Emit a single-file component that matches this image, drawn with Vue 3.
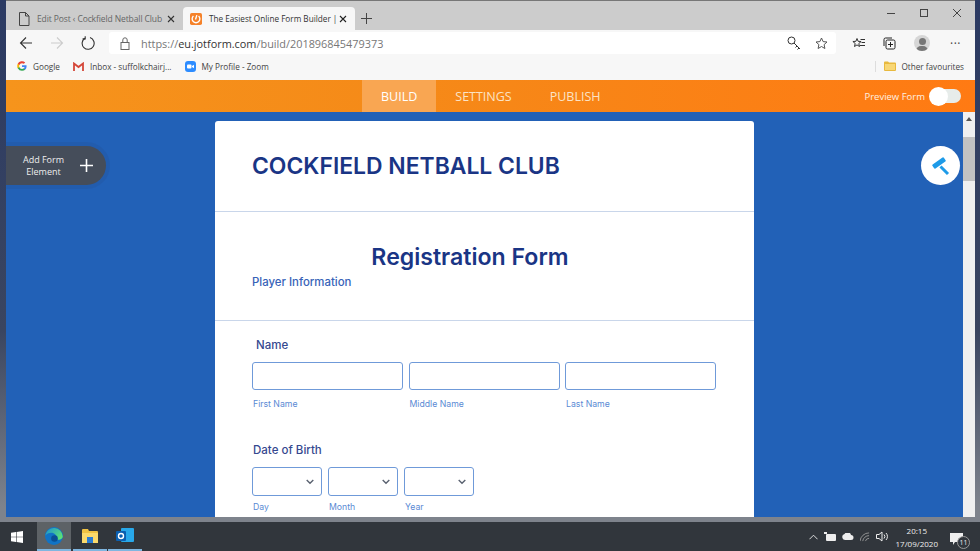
<script setup>
const navItems = [
  { label: 'BUILD', active: true },
  { label: 'SETTINGS', active: false },
  { label: 'PUBLISH', active: false }
]

const nameFields = ['First Name', 'Middle Name', 'Last Name']
const dateFields = ['Day', 'Month', 'Year']
</script>

<template>
  <div class="desktop">
    <div class="browser">
      <div class="tabstrip">
        <div class="tab">
          <svg class="tab-icon" width="16" height="16" viewBox="0 0 16 16" fill="none" stroke="#444" stroke-width="1">
            <path d="M3.5 1.5h6l3.5 3.5v9.500h-9.500z M9.500 1.500v3.500h3.500" />
          </svg>
          <span class="tab-title">Edit Post ‹ Cockfield Netball Club</span>
          <svg class="tab-close" width="8" height="8" viewBox="0 0 8 8" stroke="#333" stroke-width="1.1"><path d="M1 1l6 6M7 1l-6 6" /></svg>
        </div>
        <div class="tab current">
          <svg class="tab-icon" width="12" height="12" viewBox="0 0 14 14" fill="none">
            <rect width="14" height="14" rx="2" fill="#f5822a" />
            <path d="M4 3.500a4.500 4.500 0 1 0 6 0" stroke="#fff" stroke-width="1.600" />
            <path d="M8 2.500l-1.600 5" stroke="#fff" stroke-width="1.600" />
          </svg>
          <span class="tab-title">The Easiest Online Form Builder |</span>
          <svg class="tab-close" width="8" height="8" viewBox="0 0 8 8" stroke="#222" stroke-width="1.1"><path d="M1 1l6 6M7 1l-6 6" /></svg>
        </div>
        <svg class="new-tab" width="11" height="11" viewBox="0 0 11 11" stroke="#444" stroke-width="1"><path d="M5.500 0v11M0 5.500h11" /></svg>
        <div class="win-controls">
          <svg width="10" height="10" viewBox="0 0 10 10" stroke="#444" stroke-width="1"><path d="M1 5.500h8" /></svg>
          <svg width="10" height="10" viewBox="0 0 10 10" stroke="#444" stroke-width="1" fill="none"><rect x="1.500" y="1.500" width="7" height="7" /></svg>
          <svg width="10" height="10" viewBox="0 0 10 10" stroke="#444" stroke-width="1"><path d="M1 1l8 8M9 1l-8 8" /></svg>
        </div>
      </div>

      <div class="toolbar">
        <svg class="nav-icon" width="14" height="14" viewBox="0 0 14 14" fill="none" stroke="#333" stroke-width="1.1"><path d="M13 7H1.500M7 1.500L1.500 7 7 12.500" /></svg>
        <svg class="nav-icon" width="14" height="14" viewBox="0 0 14 14" fill="none" stroke="#ccc" stroke-width="1.1"><path d="M1 7h11.500M7 1.500L12.500 7 7 12.500" /></svg>
        <svg class="nav-icon" width="14" height="14" viewBox="0 0 14 14" fill="none" stroke="#333" stroke-width="1.1"><path d="M4 2.200A6 6 0 1 0 9 1.600" /><path d="M4.200 0.300v2.600h-2.600" /></svg>
        <div class="addressbar">
          <svg width="10" height="13" viewBox="0 0 10 13" fill="none" stroke="#666" stroke-width="1"><rect x="1" y="5.500" width="8" height="7" /><path d="M2.800 5.500V3a2.200 2.200 0 0 1 4.400 0v2.500" /></svg>
          <span class="url">https://<b>eu.jotform.com</b>/build/201896845479373</span>
          <svg class="key" width="14" height="14" viewBox="0 0 14 14" fill="none" stroke="#333" stroke-width="1"><circle cx="4.500" cy="4.500" r="3.500" /><path d="M7 7l6 6M10 10l-1.500 1.500M12 12l-1.500 1.500" /></svg>
          <svg class="star" width="13" height="13" viewBox="0 0 13 13" fill="none" stroke="#555" stroke-width="1"><path d="M6.500 1l1.600 3.600 3.900.4-2.900 2.600.8 3.900-3.400-2-3.400 2 .8-3.900L1 5l3.900-.4z" /></svg>
        </div>
        <div class="tool-icons">
          <svg width="13" height="13" viewBox="0 0 13 13" fill="none" stroke="#333" stroke-width="1"><path d="M5 1.500l1.100 2.800 3 .2-2.300 2 .7 3-2.500-1.600-2.500 1.600.7-3-2.300-2 3-.2z" /><path d="M8.500 2.500H13M9.500 5.500H13M8 8.500h5" /></svg>
          <svg width="13" height="13" viewBox="0 0 13 13" fill="none" stroke="#222" stroke-width="1"><rect x="3" y="3" width="9" height="9" rx="1.500" /><path d="M1 9V2.500A1.500 1.500 0 0 1 2.500 1H9M7.500 5v5M5 7.500h5" /></svg>
          <div class="avatar">
            <span class="avatar-head"></span>
            <span class="avatar-body"></span>
          </div>
          <span class="more">···</span>
        </div>
      </div>

      <div class="bookmarks">
        <div class="bookmark">
          <svg width="10" height="10" viewBox="0 0 24 24">
            <path fill="#4285f4" d="M23 12.300c0-.8-.1-1.600-.2-2.300H12v4.400h6.200a5.300 5.300 0 0 1-2.300 3.500v2.900h3.700c2.200-2 3.400-5 3.400-8.500z" />
            <path fill="#34a853" d="M12 23.500c3.100 0 5.700-1 7.600-2.800l-3.700-2.900c-1 .7-2.300 1.100-3.900 1.100-3 0-5.500-2-6.400-4.700H1.800v3a11.500 11.500 0 0 0 10.200 6.300z" />
            <path fill="#fbbc05" d="M5.600 14.200a6.900 6.900 0 0 1 0-4.400v-3H1.800a11.500 11.500 0 0 0 0 10.400z" />
            <path fill="#ea4335" d="M12 5.100c1.700 0 3.200.6 4.400 1.700l3.300-3.300A11.500 11.500 0 0 0 1.800 6.800l3.800 3c.9-2.700 3.400-4.700 6.400-4.700z" />
          </svg>
          <span>Google</span>
        </div>
        <div class="bookmark">
          <svg width="11" height="9" viewBox="0 0 11 9" fill="none" stroke="#d44638" stroke-width="1.800"><path d="M1 9V1.500L5.500 5 10 1.500V9" /></svg>
          <span>Inbox - suffolkchairj...</span>
        </div>
        <div class="bookmark">
          <svg width="11" height="11" viewBox="0 0 11 11"><rect width="11" height="11" rx="3" fill="#2d8cff" /><rect x="2" y="3.500" width="4.500" height="4" rx="1" fill="#fff" /><path d="M7 5l2-1.300v3.600L7 6z" fill="#fff" /></svg>
          <span>My Profile - Zoom</span>
        </div>
        <div class="other-favs">
          <svg width="12" height="10" viewBox="0 0 12 10"><path d="M0 1.500a1 1 0 0 1 1-1h3l1 1h6a1 1 0 0 1 1 1V9a1 1 0 0 1-1 1H1a1 1 0 0 1-1-1z" fill="#e8b93e" /><rect x="1" y="3" width="10" height="6" fill="#f8d775" /></svg>
          <span>Other favourites</span>
        </div>
      </div>

      <header class="builder-nav">
        <nav class="builder-tabs">
          <span v-for="item in navItems" :key="item.label" class="builder-tab" :class="{ active: item.active }">{{ item.label }}</span>
        </nav>
        <div class="preview">
          <span>Preview Form</span>
          <div class="toggle"><span class="knob"></span></div>
        </div>
      </header>

      <div class="stage">
        <main class="canvas">
          <button class="add-element">
            <span>Add Form Element</span>
            <svg width="13" height="13" viewBox="0 0 13 13" stroke="#fff" stroke-width="1.600"><path d="M6.500 0v13M0 6.500h13" /></svg>
          </button>
          <button class="paint">
            <svg width="20" height="20" viewBox="0 0 20 20" fill="#1e9be8">
              <rect x="1" y="4.500" width="14" height="5" rx="1" transform="rotate(-35 8 7)" />
              <path d="M9.500 10.500l7.500 7.500" stroke="#1e9be8" stroke-width="3" />
            </svg>
          </button>

          <section class="card">
            <div class="club">
              <h1>COCKFIELD NETBALL CLUB</h1>
            </div>
            <div class="intro">
              <h2>Registration Form</h2>
              <p>Player Information</p>
            </div>
            <div class="fields">
              <h3 class="name-label">Name</h3>
              <div class="name-row">
                <div v-for="field in nameFields" :key="field" class="name-field">
                  <div class="input"></div>
                  <label>{{ field }}</label>
                </div>
              </div>
              <h3 class="dob-label">Date of Birth</h3>
              <div class="dob-row">
                <div v-for="field in dateFields" :key="field" class="dob-field">
                  <div class="select">
                    <svg width="8" height="6" viewBox="0 0 8 6" fill="none" stroke="#5a6270" stroke-width="1.400"><path d="M.7 1l3.300 3.300L7.300 1" /></svg>
                  </div>
                  <label>{{ field }}</label>
                </div>
              </div>
            </div>
          </section>
        </main>

        <div class="scrollbar">
          <span class="arrow"></span>
          <span class="thumb"></span>
        </div>
      </div>
    </div>

    <footer class="taskbar">
      <svg class="start" width="12" height="12" viewBox="0 0 12 12" fill="#fff"><path d="M0 1.700l5-.7v4.700H0zM5.600.9L12 0v5.700H5.600zM0 6.300h5V11l-5-.7zM5.600 6.300H12V12l-6.400-.9z" /></svg>
      <div class="task-app running active">
        <svg width="18" height="18" viewBox="0 0 18 18">
          <defs>
            <linearGradient id="edgeGlow" x1="0" y1="0" x2="1" y2="0.600">
              <stop offset="0" stop-color="#1b8fd6" />
              <stop offset="1" stop-color="#5adf78" />
            </linearGradient>
          </defs>
          <circle cx="9" cy="9" r="9" fill="#1173c5" />
          <path d="M.3 8.500a8.800 8.800 0 0 1 17.500 1c0 2-2 3.200-4 3.200-1.500 0-2.500-.7-2.500-1.500 1.200-3-2-5.500-5-5.500-2.500 0-4.900 1.300-6 2.800z" fill="url(#edgeGlow)" />
          <circle cx="9.500" cy="11.500" r="3.300" fill="#0a4f94" />
        </svg>
      </div>
      <div class="task-app running">
        <svg width="16" height="14" viewBox="0 0 16 14"><path d="M0 1a1 1 0 0 1 1-1h5l1 2h8a1 1 0 0 1 1 1v10a1 1 0 0 1-1 1H1a1 1 0 0 1-1-1z" fill="#f0c243" /><rect x="0" y="4" width="16" height="10" fill="#fbd96b" /><rect x="5" y="8" width="6" height="6" fill="#2b7cd3" /></svg>
      </div>
      <div class="task-app running">
        <svg width="18" height="16" viewBox="0 0 18 16"><rect x="5" y="0" width="13" height="14" rx="1" fill="#28a8ea" /><rect x="0" y="3" width="10" height="10" rx="1" fill="#0a5fb0" /><circle cx="5" cy="8" r="2.500" fill="none" stroke="#fff" stroke-width="1.400" /></svg>
      </div>
      <div class="tray">
        <svg width="9" height="6" viewBox="0 0 10 6" fill="none" stroke="#eee" stroke-width="1"><path d="M.5 5.500L5 1l4.500 4.500" /></svg>
        <svg width="12" height="9" viewBox="0 0 12 9" fill="#eee"><rect x="2" y="2" width="10" height="7" rx="1" /><path d="M0 0h3v2H0z" /></svg>
        <svg width="12" height="7" viewBox="0 0 12 7" fill="#eee"><path d="M3 7a3 3 0 0 1-.5-5.900A3.500 3.500 0 0 1 9 2a2.500 2.500 0 0 1 0 5z" /></svg>
        <svg width="10" height="10" viewBox="0 0 11 10" fill="none" stroke="#999" stroke-width="1"><path d="M0 9.500A10 10 0 0 1 10 .5M3 9.500A7 7 0 0 1 10 3.500M6 9.500A4 4 0 0 1 10 6.500" /></svg>
        <svg width="12" height="11" viewBox="0 0 12 11" fill="none" stroke="#eee" stroke-width="1"><path d="M.5 3.500h2.500L6 1v9L3 7.500H.5zM8 3.500a3 3 0 0 1 0 4M10 2a5 5 0 0 1 0 7" /></svg>
        <div class="clock"><span>20:15</span><span>17/09/2020</span></div>
        <div class="notify">
          <svg width="13" height="12" viewBox="0 0 13 12" fill="#eee"><path d="M0 0h13v9H5l-2 3V9H0z" /></svg>
          <span class="notify-count">11</span>
        </div>
      </div>
    </footer>
  </div>
</template>

<style scoped>
.desktop {
  width: 980px;
  height: 551px;
  overflow: hidden;
  display: flex;
  flex-direction: column;
  background: linear-gradient(180deg, #2b3a63 0%, #3a4560 60%, #7e838c 92%);
  font-family: "Open Sans", "Noto Sans", sans-serif;
}

.browser {
  width: 969px;
  height: 517px;
  margin-left: 6px;
  flex: none;
  display: flex;
  flex-direction: column;
  overflow: hidden;
  border-top: 1px solid #777;
  box-sizing: border-box;
}

.tabstrip {
  height: 29px;
  flex: none;
  background: #cccccc;
  display: flex;
  align-items: flex-end;
  padding-left: 1px;
}

.tab {
  width: 176px;
  height: 23px;
  display: flex;
  align-items: center;
  padding: 0 8px 0 6px;
  box-sizing: border-box;
  font-size: 8.5px;
  letter-spacing: -0.1px;
  color: #666;
}

.tab-icon {
  flex: none;
  margin: 0 5px 0 3px;
}

.tab.current {
  width: 172px;
  background: #f7f7f7;
  border-radius: 4px 4px 0 0;
  color: #333;
  font-size: 8.2px;
  letter-spacing: 0;
}

.tab.current .tab-icon {
  margin: 0 7px 0 1px;
}

.tab-title {
  flex: none;
  white-space: nowrap;
}

.tab-close {
  flex: none;
  margin-left: auto;
}

.new-tab {
  margin: 0 0 6px 6px;
}

.win-controls {
  margin: 0 0 12px auto;
  display: flex;
  gap: 23px;
  padding-right: 13px;
  align-self: flex-end;
}

.toolbar {
  height: 26px;
  flex: none;
  background: #f7f7f7;
  display: flex;
  align-items: center;
  padding-left: 13px;
  gap: 17px;
}

.addressbar {
  width: 727px;
  height: 22px;
  margin-left: -3px;
  background: #fff;
  border-radius: 3px;
  display: flex;
  align-items: center;
  padding: 0 8px 0 11px;
  box-sizing: border-box;
  gap: 11px;
}

.url {
  font-size: 10.9px;
  color: #777;
  flex: 1;
  white-space: nowrap;
}

.url b {
  font-weight: 400;
  color: #333;
}

.key {
  margin-right: 3px;
}

.tool-icons {
  display: flex;
  align-items: center;
  gap: 18px;
  margin-left: -1px;
}

.avatar {
  width: 16px;
  height: 16px;
  border-radius: 50%;
  background: #d6d6d6;
  display: flex;
  flex-direction: column;
  align-items: center;
  justify-content: flex-end;
  gap: 1px;
  overflow: hidden;
}

.avatar-head {
  width: 7px;
  height: 7px;
  border-radius: 50%;
  background: #777;
}

.avatar-body {
  width: 12px;
  height: 5px;
  border-radius: 6px 6px 0 0;
  background: #777;
}

.more {
  font-size: 12px;
  letter-spacing: 0.5px;
  color: #444;
  margin-left: 2px;
}

.bookmarks {
  height: 24px;
  flex: none;
  background: #f7f7f7;
  display: flex;
  align-items: center;
  padding: 0 0 4px 11px;
  font-size: 8.2px;
  color: #444;
  gap: 13px;
  box-sizing: border-box;
}

.bookmark {
  display: flex;
  align-items: center;
  gap: 6px;
}

.other-favs {
  margin-left: auto;
  display: flex;
  align-items: center;
  gap: 5px;
  padding-right: 11px;
  padding-left: 8px;
  border-left: 1px solid #ddd;
  height: 11px;
}

.builder-nav {
  height: 32px;
  flex: none;
  background: linear-gradient(90deg, #f6941c 0%, #f58a18 40%, #ff7a13 100%);
  position: relative;
  display: flex;
  justify-content: flex-end;
  font-family: "Open Sans", sans-serif;
}

.builder-tabs {
  position: absolute;
  left: 356px;
  top: 0;
  height: 100%;
  display: flex;
}

.builder-tab {
  display: flex;
  align-items: center;
  padding: 0 19px;
  font-size: 12.5px;
  color: #fbe3c6;
}

.builder-tab.active {
  background: #f9a652;
  color: #fff;
}

.preview {
  display: flex;
  align-items: center;
  font-size: 9.5px;
  color: #fff0e0;
  gap: 7px;
  padding-right: 14px;
}

.toggle {
  width: 29px;
  height: 14px;
  background: #e7ecea;
  border-radius: 7px;
  position: relative;
}

.knob {
  position: absolute;
  left: -3px;
  top: -2.5px;
  width: 19px;
  height: 19px;
  border-radius: 50%;
  background: #fff;
}

.stage {
  flex: 1;
  min-height: 0;
  display: flex;
}

.canvas {
  flex: 1;
  position: relative;
  background: #2261b7;
  padding-top: 9px;
  overflow: hidden;
}

.add-element {
  position: absolute;
  left: 0;
  top: 34px;
  width: 100px;
  height: 39px;
  border: none;
  border-radius: 0 19.5px 19.5px 0;
  background: #454d5a;
  box-shadow: 0 0 0 4px rgba(40, 70, 120, 0.15);
  display: flex;
  align-items: center;
  padding: 0 0 0 12px;
  box-sizing: border-box;
  color: #eee;
  font-family: "Open Sans", sans-serif;
  font-size: 9px;
  line-height: 11.5px;
  gap: 11px;
}

.add-element span {
  width: 51px;
  text-align: center;
}

.paint {
  position: absolute;
  left: 915px;
  top: 34px;
  width: 39px;
  height: 39px;
  border: none;
  border-radius: 50%;
  background: #fff;
  display: flex;
  align-items: center;
  justify-content: center;
  padding: 0;
}

.card {
  width: 539px;
  height: 396px;
  margin-left: 209px;
  background: #fff;
  border-radius: 3px 3px 0 0;
  font-family: Inter, sans-serif;
  color: #1a3585;
  overflow: hidden;
}

.club {
  height: 91px;
  padding: 31px 38px 0 37px;
  box-sizing: border-box;
  border-bottom: 1px solid #c9d6ea;
}

h1, h2, h3, p {
  margin: 0;
}

.club h1 {
  font-size: 22.9px;
  font-weight: 600;
  line-height: 28px;
}

.intro {
  height: 109px;
  padding-top: 30px;
  box-sizing: border-box;
  border-bottom: 1px solid #c9d6ea;
  position: relative;
}

.intro h2 {
  font-size: 23.1px;
  font-weight: 600;
  line-height: 30px;
  width: 510px;
  text-align: center;
}

.intro p {
  margin: 3px 0 0 37px;
  font-size: 11.4px;
  font-weight: 500;
  color: #3763b8;
  line-height: 15px;
}

.fields {
  padding: 17px 37px 0;
}

.fields h3 {
  font-size: 11.5px;
  font-weight: 500;
  line-height: 15px;
  color: #35488f;
}

.name-label {
  margin-left: 4px;
}

.name-row {
  display: flex;
  gap: 5.5px;
  margin-top: 9px;
}

.name-field {
  width: 151px;
}

.input {
  height: 28px;
  border: 1px solid #6f9ad9;
  border-radius: 3px;
  box-sizing: border-box;
  width: 100%;
}

label {
  display: block;
  margin: 9px 0 0 1px;
  font-size: 8.7px;
  color: #5a8ad4;
  line-height: 10px;
}

.dob-label {
  margin: 34px 0 0 1px;
}

.dob-row {
  display: flex;
  gap: 6px;
  margin-top: 9px;
}

.dob-field {
  width: 70px;
}

.select {
  height: 29px;
  border: 1px solid #6f9ad9;
  border-radius: 3px;
  box-sizing: border-box;
  display: flex;
  align-items: center;
  justify-content: flex-end;
  padding-right: 7px;
}

.dob-field label {
  margin-top: 6px;
}

.scrollbar {
  width: 12px;
  flex: none;
  background: #f0f0f0;
  display: flex;
  flex-direction: column;
  align-items: center;
  padding-top: 5px;
  box-sizing: border-box;
}

.arrow {
  width: 0;
  height: 0;
  border-left: 3.5px solid transparent;
  border-right: 3.5px solid transparent;
  border-bottom: 4px solid #555;
}

.thumb {
  width: 100%;
  height: 44px;
  margin-top: 16px;
  background: #c2c2c2;
}

.taskbar {
  margin-top: 5px;
  flex: 1;
  background: #31363c;
  display: flex;
  align-items: center;
}

.start {
  margin: 0 14px 0 11px;
}

.task-app {
  width: 34px;
  height: 100%;
  display: flex;
  align-items: center;
  justify-content: center;
  box-sizing: border-box;
  margin-right: 1.5px;
}

.task-app.running {
  border-bottom: 2px solid #7fb6e0;
}

.task-app.active {
  background: #5d6266;
}

.tray {
  margin-left: auto;
  display: flex;
  align-items: center;
  gap: 6px;
  color: #eee;
  padding-right: 10px;
}

.clock {
  display: flex;
  flex-direction: column;
  align-items: center;
  font-size: 8px;
  line-height: 13px;
  margin: 0 6px 0 2px;
}

.notify {
  position: relative;
  width: 20px;
  height: 18px;
}

.notify-count {
  position: absolute;
  right: 0;
  bottom: -3px;
  width: 11px;
  height: 11px;
  border-radius: 50%;
  background: #31363c;
  border: 1px solid #999;
  font-size: 7px;
  line-height: 11px;
  text-align: center;
}
</style>

<style>
html, body {
  margin: 0;
  background: #31363c;
}
</style>
